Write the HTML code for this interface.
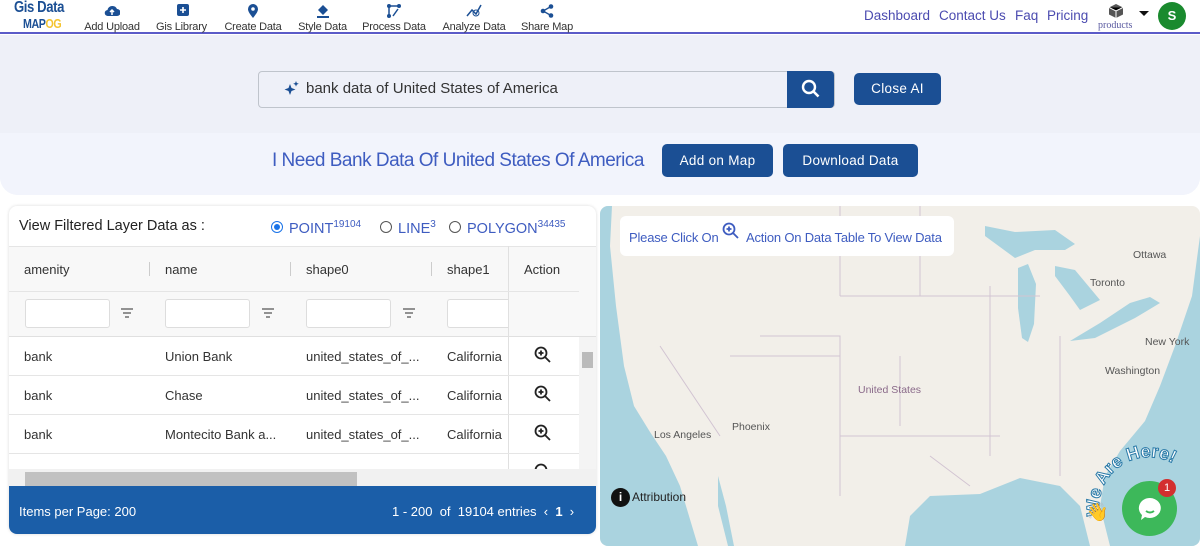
<!DOCTYPE html>
<html><head><style>
*{box-sizing:border-box;margin:0;padding:0}
body{width:1200px;height:551px;overflow:hidden;background:#fff;font-family:"Liberation Sans",sans-serif;position:relative}
.top{position:absolute;left:0;top:0;width:1200px;height:34px;background:#fff;border-bottom:2px solid #5b5bc8}
.nav{position:absolute;top:1px;text-align:center;font-size:11px;color:#333;white-space:nowrap;letter-spacing:-.2px}
.nav svg{display:block;margin:3px auto 3px}
.rl{position:absolute;top:8px;font-size:13.5px;color:#4b4bb0;white-space:nowrap}
.hero{position:absolute;left:0;top:35px;width:1200px;height:160px;background:#eef0f8;border-radius:0 0 18px 18px}
.hero2{position:absolute;left:0;top:133px;width:1200px;height:62px;background:#f2f4fc;border-radius:0 0 18px 18px}
.btn{position:absolute;background:#1b4f94;color:#fff;font-size:13.5px;border-radius:5px;text-align:center;letter-spacing:.3px;white-space:nowrap}
.panel{position:absolute;left:9px;top:206px;width:587px;height:328px;border-radius:8px;box-shadow:0 0 3px rgba(0,0,0,.15);overflow:hidden;background:#fff}
.t{position:absolute;font-size:13px;color:#333;white-space:nowrap}
.row{position:absolute;left:0;width:570px;height:39px;border-bottom:1px solid #e5e5e5}
</style></head><body>
<div class="top">
 <div style="position:absolute;left:14px;top:0;font-weight:bold;color:#1b4f94;font-size:16px;line-height:16px;letter-spacing:-.5px;transform:scaleX(.82);transform-origin:left">Gis Data<br><span style="margin-left:11px;font-size:13px">MAP<span style="color:#f4c430">OG</span></span></div>
 <div class="nav" style="left:82px;width:60px"><svg width="16" height="14"><path d="M4 12h9a3.5 3.5 0 0 0 0-7 5 5 0 0 0-9.5 1A3 3 0 0 0 4 12z" fill="#1b4f94"/><path d="M8 11V6M6 8l2-2 2 2" stroke="#fff" stroke-width="1.5" fill="none"/></svg>Add Upload</div>
 <div class="nav" style="left:153px;width:57px"><svg width="14" height="14"><rect x="2" y="0" width="12" height="12" rx="2" fill="#1b4f94"/><path d="M8 3v6M5 6h6" stroke="#fff" stroke-width="1.6"/></svg>Gis Library</div>
 <div class="nav" style="left:221px;width:64px"><svg width="12" height="14"><path d="M6 14C2 9 1 7 1 5a5 5 0 0 1 10 0c0 2-1 4-5 9z" fill="#1b4f94"/><circle cx="6" cy="5" r="1.8" fill="#fff"/></svg>Create Data</div>
 <div class="nav" style="left:295px;width:55px"><svg width="16" height="14"><path d="M3 6l5-5 5 5-5 5z" fill="#1b4f94"/><path d="M2 13h12" stroke="#1b4f94" stroke-width="2"/></svg>Style Data</div>
 <div class="nav" style="left:360px;width:68px"><svg width="16" height="14"><circle cx="3" cy="2" r="2" fill="#1b4f94"/><circle cx="13" cy="2" r="2" fill="#1b4f94"/><circle cx="3" cy="12" r="2" fill="#1b4f94"/><path d="M3 2v10M3 2h10M12 5l-5 7" stroke="#1b4f94" stroke-width="1.5"/></svg>Process Data</div>
 <div class="nav" style="left:439px;width:70px"><svg width="16" height="14"><path d="M1 12l5-6 4 4 5-9" stroke="#1b4f94" stroke-width="1.5" fill="none"/><circle cx="10" cy="9" r="3" stroke="#1b4f94" fill="none"/></svg>Analyze Data</div>
 <div class="nav" style="left:519px;width:56px"><svg width="14" height="14"><circle cx="11" cy="2.5" r="2.3" fill="#1b4f94"/><circle cx="3" cy="7" r="2.3" fill="#1b4f94"/><circle cx="11" cy="11.5" r="2.3" fill="#1b4f94"/><path d="M11 2.5L3 7l8 4.5" stroke="#1b4f94" stroke-width="1.3" fill="none"/></svg>Share Map</div>
 <div class="rl" style="left:864px">Dashboard</div>
 <div class="rl" style="left:939px">Contact Us</div>
 <div class="rl" style="left:1015px">Faq</div>
 <div class="rl" style="left:1047px">Pricing</div>
 <svg style="position:absolute;left:1109px;top:4px" width="14" height="14"><path d="M7 0l7 3.5v7L7 14 0 10.5v-7z" fill="#555"/><path d="M0 3.5L7 7l7-3.5M7 7v7" stroke="#fff" stroke-width="1"/></svg>
 <div style="position:absolute;left:1098px;top:20px;font-family:'Liberation Serif',serif;font-size:10px;color:#5a5aa0">products</div>
 <div style="position:absolute;left:1139px;top:11px;border:5px solid transparent;border-top:5px solid #111"></div>
 <div style="position:absolute;left:1158px;top:2px;width:28px;height:28px;border-radius:50%;background:#1a8a2e;color:#fff;font-size:13px;font-weight:bold;text-align:center;line-height:28px">S</div>
</div>
<div class="hero"></div><div class="hero2"></div>
<div style="position:absolute;left:258px;top:71px;width:577px;height:37px;border:1px solid #bfc4cc;border-radius:4px;background:#eef0f8"></div>
<svg style="position:absolute;left:283px;top:80px" width="18" height="18"><path d="M7 4l1.5 4 4 1.5-4 1.5L7 15l-1.5-4-4-1.5 4-1.5z" fill="#1b4f94"/><path d="M13 1l.8 2 2 .8-2 .8-.8 2-.8-2-2-.8 2-.8z" fill="#1b4f94"/></svg>
<div style="position:absolute;left:306px;top:80px;font-size:15px;color:#333">bank data of United States of America</div>
<div class="btn" style="left:787px;top:71px;width:47px;height:37px;border-radius:0 4px 4px 0"><svg width="20" height="20" style="margin-top:8px"><circle cx="8" cy="8" r="6" stroke="#fff" stroke-width="2.4" fill="none"/><path d="M12.5 12.5l5 5" stroke="#fff" stroke-width="2.6"/></svg></div>
<div class="btn" style="left:854px;top:73px;width:87px;height:32px;line-height:32px">Close AI</div>
<div style="position:absolute;left:272px;top:150px;font-size:19px;color:#3e5cc0;letter-spacing:-.5px;white-space:nowrap">I Need Bank Data Of United States Of America</div>
<div class="btn" style="left:662px;top:144px;width:111px;height:33px;line-height:33px">Add on Map</div>
<div class="btn" style="left:783px;top:144px;width:135px;height:33px;line-height:33px">Download Data</div>

<div class="panel">
 <div class="t" style="left:10px;top:12px;font-size:14.5px;color:#222">View Filtered Layer Data as :</div>
 <div style="position:absolute;left:262px;top:15px;width:12px;height:12px;border-radius:50%;border:1px solid #1a73e8"><div style="margin:2px;width:6px;height:6px;border-radius:50%;background:#1a73e8"></div></div>
 <div class="t" style="left:280px;top:13px;font-size:14.5px;color:#3e5cc0">POINT<sup style="font-size:10px">19104</sup></div>
 <div style="position:absolute;left:371px;top:15px;width:12px;height:12px;border-radius:50%;border:1px solid #555"></div>
 <div class="t" style="left:389px;top:13px;font-size:14.5px;color:#3e5cc0">LINE<sup style="font-size:10px">3</sup></div>
 <div style="position:absolute;left:440px;top:15px;width:12px;height:12px;border-radius:50%;border:1px solid #555"></div>
 <div class="t" style="left:458px;top:13px;font-size:14.5px;color:#3e5cc0">POLYGON<sup style="font-size:10px">34435</sup></div>
 <div style="position:absolute;left:0;top:40px;width:587px;height:91px;background:#f8f8f8;border-top:1px solid #e5e5e5;border-bottom:1px solid #e0e0e0"></div>
 <div style="position:absolute;left:499px;top:40px;width:1px;height:240px;background:#e0e0e0"></div>
 <div class="t" style="left:15px;top:56px">amenity</div><div class="t" style="left:156px;top:56px">name</div><div class="t" style="left:297px;top:56px">shape0</div><div class="t" style="left:438px;top:56px">shape1</div><div class="t" style="left:515px;top:56px">Action</div>
 <div style="position:absolute;left:140px;top:56px;width:1px;height:14px;background:#ccc"></div><div style="position:absolute;left:281px;top:56px;width:1px;height:14px;background:#ccc"></div><div style="position:absolute;left:422px;top:56px;width:1px;height:14px;background:#ccc"></div>
 <div style="position:absolute;left:0;top:85px;width:570px;height:1px;background:#e5e5e5"></div>
 <div style="position:absolute;left:16px;top:93px;width:85px;height:29px;border:1px solid #ddd;border-radius:3px;background:#fff"></div>
 <div style="position:absolute;left:156px;top:93px;width:85px;height:29px;border:1px solid #ddd;border-radius:3px;background:#fff"></div>
 <div style="position:absolute;left:297px;top:93px;width:85px;height:29px;border:1px solid #ddd;border-radius:3px;background:#fff"></div>
 <div style="position:absolute;left:438px;top:93px;width:61px;height:29px;border:1px solid #ddd;border-right:none;border-radius:3px 0 0 3px;background:#fff"></div>
 <svg style="position:absolute;left:112px;top:102px" width="300" height="12"><g stroke="#555" stroke-width="1.3"><path d="M0 1h12M2 5h8M4 9h4"/><path d="M141 1h12M143 5h8M145 9h4"/><path d="M282 1h12M284 5h8M286 9h4"/></g></svg>
 <div class="row" style="top:131px"></div><div class="row" style="top:170px"></div><div class="row" style="top:209px"></div>
 <div class="t" style="left:15px;top:143px">bank</div><div class="t" style="left:156px;top:143px">Union Bank</div><div class="t" style="left:297px;top:143px">united_states_of_...</div><div class="t" style="left:438px;top:143px">California</div>
 <div class="t" style="left:15px;top:182px">bank</div><div class="t" style="left:156px;top:182px">Chase</div><div class="t" style="left:297px;top:182px">united_states_of_...</div><div class="t" style="left:438px;top:182px">California</div>
 <div class="t" style="left:15px;top:221px">bank</div><div class="t" style="left:156px;top:221px">Montecito Bank a...</div><div class="t" style="left:297px;top:221px">united_states_of_...</div><div class="t" style="left:438px;top:221px">California</div>
 <svg style="position:absolute;left:525px;top:140px" width="20" height="130"><g stroke="#222" stroke-width="1.8" fill="none"><circle cx="7" cy="7" r="5.5"/><path d="M11 11l5 5M7 4.5v5M4.5 7h5"/><circle cx="7" cy="46" r="5.5"/><path d="M11 50l5 5M7 43.5v5M4.5 46h5"/><circle cx="7" cy="85" r="5.5"/><path d="M11 89l5 5M7 82.5v5M4.5 85h5"/><circle cx="7" cy="124" r="5.5"/></g></svg>
 <div style="position:absolute;left:570px;top:131px;width:17px;height:132px;background:#f4f4f4"></div>
 <div style="position:absolute;left:573px;top:146px;width:11px;height:16px;background:#bbb"></div>
 <div style="position:absolute;left:0;top:263px;width:587px;height:17px;background:#f1f1f1"></div>
 <div style="position:absolute;left:16px;top:266px;width:332px;height:14px;background:#c1c1c1"></div>
 <div style="position:absolute;left:0;top:280px;width:587px;height:48px;background:#1b5ea8"></div>
 <div class="t" style="left:10px;top:298px;color:#fff">Items per Page: 200</div>
 <div class="t" style="left:383px;top:298px;color:#fff">1 - 200 &nbsp;of &nbsp;19104 entries &nbsp;‹ &nbsp;<b>1</b> &nbsp;›</div>
</div>

<div style="position:absolute;left:600px;top:206px;width:600px;height:340px;border-radius:8px;overflow:hidden;background:#f2efe9">
<svg width="600" height="340" style="position:absolute;left:0;top:0">
 <path d="M0 0H12L10 40 16 100 24 160 34 200 50 226 66 250 80 280 92 320 98 340H0z" fill="#aad3df"/>
 <path d="M118 270l8 30 8 40h-6l-10-40z" fill="#aad3df"/>
 <path d="M305 340L310 310 330 290 380 288 420 272 460 280 480 300 490 340z" fill="#aad3df"/>
 <path d="M600 30L592 90 575 140 560 180 545 215 520 245 505 270 500 300 510 340H600z" fill="#aad3df"/>
 <path d="M385 20l30 6 40-2 20 14-10 6-30 0-20 8-30-22z" fill="#aad3df"/>
 <path d="M418 62l10-4 8 20-2 40-6 18-6-4-4-30z" fill="#aad3df"/>
 <path d="M455 60l20 4 25 30-20 10-10-14-15-20z" fill="#aad3df"/>
 <path d="M470 135l30-18 30-20 20-6 10 6-25 15-40 20z" fill="#aad3df"/>
 <g stroke="#d2c4d2" stroke-width="1" fill="none"><path d="M160 130h80v160M130 150h110v50M240 90h200M240 230h160M300 150v70M390 80v170M460 130v140M330 250l40 30M60 140l60 90M240 0v90M320 0v90"/></g>
 <g font-family="Liberation Sans,sans-serif" font-size="10.5" fill="#555"><text x="258" y="187" fill="#8a6a8a">United States</text><text x="132" y="224">Phoenix</text><text x="54" y="232">Los Angeles</text><text x="533" y="52">Ottawa</text><text x="490" y="80">Toronto</text><text x="545" y="139">New York</text><text x="505" y="168">Washington</text></g>
</svg>
<div style="position:absolute;left:20px;top:10px;width:334px;height:40px;background:#fff;border-radius:6px"></div>
<div style="position:absolute;left:29px;top:24px;font-size:13px;color:#3e5cc0;letter-spacing:-.2px">Please Click On</div>
<svg style="position:absolute;left:122px;top:16px" width="18" height="18"><g stroke="#3e5cc0" stroke-width="1.8" fill="none"><circle cx="7" cy="7" r="5.5"/><path d="M11 11l5 5M7 4.5v5M4.5 7h5"/></g></svg>
<div style="position:absolute;left:146px;top:24px;font-size:13px;color:#3e5cc0;letter-spacing:-.2px">Action On Data Table To View Data</div>
<div style="position:absolute;left:11px;top:282px;width:19px;height:19px;border-radius:50%;background:#111;color:#fff;font-size:12px;font-weight:bold;text-align:center;line-height:19px">i</div>
<div style="position:absolute;left:32px;top:284px;font-size:12px;color:#222">Attribution</div>
<svg style="position:absolute;left:480px;top:230px" width="120" height="110"><defs><path id="arc" d="M20 80 A 48 48 0 0 1 118 62"/></defs><text font-family="Liberation Sans,sans-serif" font-weight="bold" font-size="18" fill="#fff" stroke="#2a7aa8" stroke-width="1"><textPath href="#arc">We Are Here!</textPath></text></svg>
<div style="position:absolute;left:522px;top:275px;width:55px;height:55px;border-radius:50%;background:#3db85a"></div>
<svg style="position:absolute;left:537px;top:290px" width="26" height="26"><path d="M13 2a11 10 0 1 1-5 19l-4 3 1-5A11 10 0 0 1 13 2z" fill="#fff"/><path d="M9 15q4 3 8 0" stroke="#3db85a" stroke-width="2" fill="none"/></svg>
<div style="position:absolute;left:558px;top:273px;width:18px;height:18px;border-radius:50%;background:#d32f2f;color:#fff;font-size:11px;text-align:center;line-height:18px">1</div>
<div style="position:absolute;left:486px;top:296px;font-size:18px">👋</div>
</div>
</body></html>
